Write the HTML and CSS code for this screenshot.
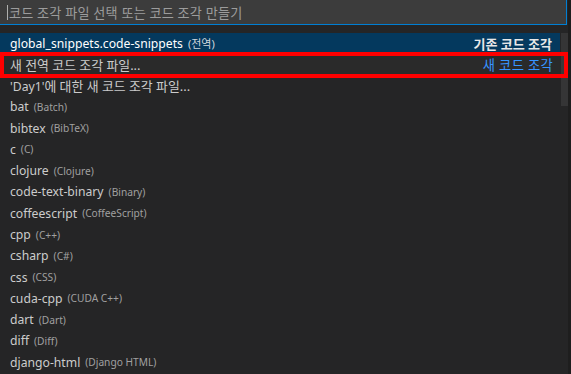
FILE: index.html
```html
<!DOCTYPE html>
<html lang="ko">
<head>
<meta charset="utf-8">
<link rel="stylesheet" href="styles.css">
</head>
<body>
<div class="widget">
  <div class="input">
    <span class="caret"></span>
    <span class="placeholder">코드 조각 파일 선택 또는 코드 조각 만들기</span>
  </div>
  <div class="list">
    <div class="row selected">
      <span class="label">global_snippets.code-snippets</span><span class="desc ko">(전역)</span>
      <span class="right bold">기존 코드 조각</span>
    </div>
    <div class="row hover">
      <span class="label ko">새 전역 코드 조각 파일...</span>
      <span class="right link">새 코드 조각</span>
    </div>
    <div class="row"><span class="label">'Day1'<span class="ko">에 대한 새 코드 조각 파일...</span></span></div>
    <div class="row"><span class="label">bat</span><span class="desc">(Batch)</span></div>
    <div class="row"><span class="label">bibtex</span><span class="desc">(BibTeX)</span></div>
    <div class="row"><span class="label">c</span><span class="desc">(C)</span></div>
    <div class="row"><span class="label">clojure</span><span class="desc">(Clojure)</span></div>
    <div class="row"><span class="label">code-text-binary</span><span class="desc">(Binary)</span></div>
    <div class="row"><span class="label">coffeescript</span><span class="desc">(CoffeeScript)</span></div>
    <div class="row"><span class="label">cpp</span><span class="desc">(C++)</span></div>
    <div class="row"><span class="label">csharp</span><span class="desc">(C#)</span></div>
    <div class="row"><span class="label">css</span><span class="desc">(CSS)</span></div>
    <div class="row"><span class="label">cuda-cpp</span><span class="desc">(CUDA C++)</span></div>
    <div class="row"><span class="label">dart</span><span class="desc">(Dart)</span></div>
    <div class="row"><span class="label">diff</span><span class="desc">(Diff)</span></div>
    <div class="row"><span class="label">django-html</span><span class="desc">(Django HTML)</span></div>
    <div class="scrollthumb"></div>
    <div class="annot"></div>
  </div>
</div>
</body>
</html>
```
FILE: styles.css
```css
html, body {
  margin: 0;
  padding: 0;
  width: 571px;
  height: 374px;
  overflow: hidden;
  background: #1e1e1e;
}
body {
  font-family: "Noto Sans", "Noto Sans CJK KR", sans-serif;
  color: #cccccc;
}
.widget {
  width: 568px;
  height: 374px;
  background: #252526;
  overflow: hidden;
}
.input {
  height: 24px;
  width: 559px;
  padding-left: 7px;
  background: #3c3c3c;
  border-right: 1px solid #007fd4;
  border-bottom: 1px solid #007fd4;
  display: flex;
  align-items: center;
}
.caret {
  width: 1px;
  height: 15px;
  background: #aeafad;
  margin-right: 1px;
}
.placeholder {
  color: #9c9c9c;
  font-size: 13.1px;
  letter-spacing: 0.2px;
}
.list {
  position: relative;
  margin-top: 7.5px;
}
.row {
  height: 21.27px;
  display: flex;
  align-items: center;
  padding-left: 10px;
  padding-right: 8px;
  font-size: 12.2px;
  white-space: nowrap;
}
.ko {
  font-size: 12.9px;
}
.row.selected {
  background: #04395e;
  color: #ffffff;
  width: 542px;
}
.row.hover {
  background: #2a2a2a;
  padding-right: 15px;
}
.desc {
  font-size: 10.2px;
  color: #a0a0a0;
  margin-left: 5px;
}
.desc.ko {
  font-size: 11px;
}
.row.selected .desc {
  color: #d0d6dc;
}
.right {
  margin-left: auto;
}
.bold {
  font-weight: 700;
  color: #e8e8e8;
  font-size: 13px;
}
.link {
  color: #3794ff;
  font-size: 13.3px;
  letter-spacing: 0.3px;
}
.scrollthumb {
  position: absolute;
  top: 0;
  right: 0;
  width: 7px;
  height: 73px;
  background: rgba(121, 121, 121, 0.2);
}
.annot {
  position: absolute;
  left: 0;
  top: 19px;
  width: 560px;
  height: 18px;
  border: 4px solid #ff0000;
}
```
